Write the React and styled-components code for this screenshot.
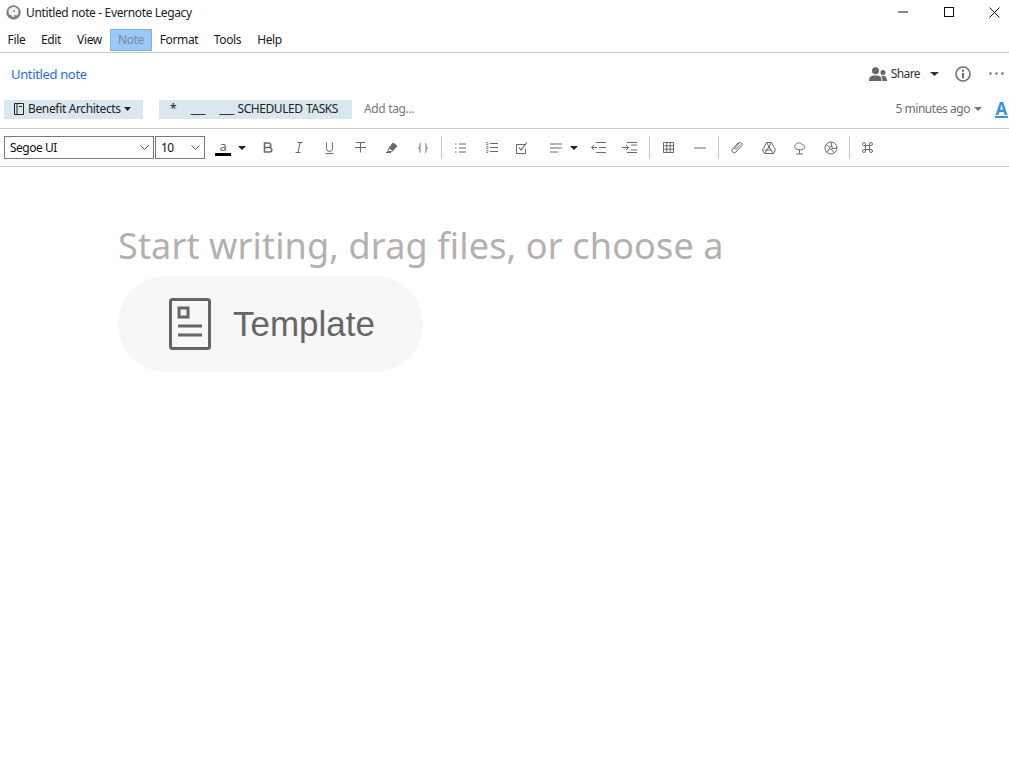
import React from 'react';
import styled, { createGlobalStyle } from 'styled-components';

const GlobalStyle = createGlobalStyle`
  html, body {
    margin: 0;
    padding: 0;
    background: #fff;
    font-family: "Noto Sans", "Open Sans", sans-serif;
  }
`;

const Window = styled.div`
  width: 1009px;
  height: 759px;
  overflow: hidden;
  display: flex;
  flex-direction: column;
  background: #fff;
  color: #1a1a1a;
  font-size: 12px;
  letter-spacing: -0.35px;
`;

const TitleBar = styled.div`
  height: 24px;
  display: flex;
  align-items: center;
  padding-left: 6px;
  gap: 5px;
`;
const TitleText = styled.span`
  flex: 1;
  color: #222;
`;
const WinButtons = styled.div`
  display: flex;
  margin-right: -8px;
`;
const WinButton = styled.button`
  width: 45.5px;
  height: 24px;
  border: 0;
  padding: 0;
  background: none;
  display: flex;
  align-items: center;
  justify-content: center;
`;

const MenuBar = styled.div`
  height: 29px;
  box-sizing: border-box;
  display: flex;
  align-items: flex-start;
  padding-top: 5px;
  border-bottom: 1px solid #c9c9c9;
`;
const MenuItem = styled.div`
  height: 22px;
  box-sizing: border-box;
  display: flex;
  align-items: center;
  justify-content: center;
  padding-bottom: 2px;
  width: ${(p) => p.$w}px;
  border: 1px solid ${(p) => (p.$active ? '#7eb4ea' : 'transparent')};
  background: ${(p) => (p.$active ? '#99c9f7' : 'transparent')};
  color: ${(p) => (p.$active ? '#7d8a99' : '#1a1a1a')};
`;

const NoteHeader = styled.div`
  height: 44px;
  box-sizing: border-box;
  display: flex;
  align-items: center;
  padding: 0 5px 3px 11px;
`;
const NoteTitle = styled.div`
  flex: 1;
  font-size: 13px;
  color: #1f6fd6;
`;
const ShareButton = styled.div`
  display: flex;
  align-items: center;
  color: #333;
`;
const ShareLabel = styled.span`
  margin: 0 10px 0 4px;
  letter-spacing: -0.6px;
`;
const HeaderIcon = styled.div`
  display: flex;
  align-items: center;
  margin-left: ${(p) => p.$ml}px;
`;

const TagRow = styled.div`
  height: 19px;
  margin-top: 3px;
  padding: 0 1px 9px 4px;
  display: flex;
  align-items: center;
  border-bottom: 1px solid #c9c9c9;
`;
const Chip = styled.div`
  height: 19px;
  box-sizing: border-box;
  display: flex;
  align-items: center;
  background: #d9e7ef;
  color: #222;
  white-space: pre;
  padding-bottom: 2px;
  width: ${(p) => p.$w}px;
  margin-right: ${(p) => p.$mr}px;
  padding-left: ${(p) => p.$pl}px;
  word-spacing: ${(p) => p.$ws || 0}px;
  letter-spacing: ${(p) => p.$ls || -0.35}px;
`;
const ChipIcon = styled.svg`
  margin-right: 4px;
`;
const AddTag = styled.div`
  flex: 1;
  color: #777;
  padding-bottom: 2px;
`;
const TimeAgo = styled.div`
  display: flex;
  align-items: center;
  color: #6e6e6e;
  gap: 4px;
  letter-spacing: -0.45px;
  padding-bottom: 2px;
`;
const FontSizeA = styled.div`
  width: 13px;
  margin-left: 13px;
  font-size: 17px;
  font-weight: 700;
  color: #3a94dc;
  letter-spacing: 0;
  line-height: 16px;
  text-align: center;
  border-bottom: 2px solid #3a94dc;
  height: 15px;
`;

const Toolbar = styled.div`
  height: 37px;
  display: flex;
  align-items: center;
  padding-left: 4px;
  border-bottom: 1px solid #c9c9c9;
`;
const Select = styled.div`
  height: 23px;
  box-sizing: border-box;
  width: ${(p) => p.$w}px;
  margin-right: ${(p) => p.$mr}px;
  border: 1px solid #7a7a7a;
  display: flex;
  align-items: center;
  justify-content: space-between;
  padding: 0 4px 0 5px;
  color: #111;
  letter-spacing: -0.5px;
`;
const ToolButton = styled.div`
  width: ${(p) => p.$w || 31}px;
  margin-left: ${(p) => p.$ml || 0}px;
  height: 24px;
  display: flex;
  align-items: center;
  justify-content: center;
  flex-shrink: 0;
`;
const ColorButton = styled(ToolButton)`
  flex-direction: column;
  color: #666;
  font-size: 13px;
  line-height: 14px;
`;
const Separator = styled.div`
  width: 1px;
  height: 23px;
  margin: 0 3px 0 ${(p) => p.$ml || 3}px;
  background: #bccddd;
`;

const Editor = styled.div`
  flex: 1;
  padding: 51px 0 0 118px;
`;
const Placeholder = styled.div`
  font-size: 36px;
  line-height: 56px;
  letter-spacing: 0.15px;
  color: #b3b0ae;
`;
const TemplateButton = styled.div`
  width: 305px;
  height: 96px;
  margin-top: 2px;
  border-radius: 48px;
  background: #f7f7f7;
  display: flex;
  align-items: center;
  padding-left: 51px;
  box-sizing: border-box;
  gap: 22px;
  font-family: "Liberation Sans", Arial, sans-serif;
  font-size: 35px;
  letter-spacing: 0;
  color: #666;
`;

const Ico = ({ children, w = 14, h = 14 }) => (
  <svg width={w} height={h} viewBox={`0 0 ${w} ${h}`} fill="none" stroke="#6a6a6a" strokeWidth="1">
    {children}
  </svg>
);

const Caret = ({ color = '#222', w = 8 }) => (
  <svg width={w} height="4" viewBox="0 0 8 4" preserveAspectRatio="none">
    <path d="M0 0h8L4 4z" fill={color} />
  </svg>
);

const Chevron = () => (
  <svg width="9" height="5" viewBox="0 0 9 5" fill="none" stroke="#555">
    <path d="M.5.5l4 4 4-4" />
  </svg>
);

const MENU = [
  ['File', 33],
  ['Edit', 36],
  ['View', 41],
  ['Note', 42, true],
  ['Format', 54],
  ['Tools', 43],
  ['Help', 41],
];

export default function App() {
  return (
    <Window>
      <GlobalStyle />
      <TitleBar>
        <svg width="15" height="15" viewBox="0 0 15 15">
          <circle cx="7.5" cy="7.5" r="7.2" fill="#808080" />
          <path d="M2.500 6.500C2.500 3.500 5 2 7.500 2c3.500 0 5 2.500 5 5 0 2.500-1.500 3.500-2.500 3.500l-1-1-1.500 3L5 10 3 9.500z" fill="#f2f2f2" />
          <circle cx="8" cy="6" r="1" fill="#808080" />
        </svg>
        <TitleText>Untitled note - Evernote Legacy</TitleText>
        <WinButtons>
          <WinButton>
            <svg width="10" height="2" viewBox="0 0 10 2"><path d="M0 1h10" stroke="#111" /></svg>
          </WinButton>
          <WinButton>
            <svg width="10" height="10" viewBox="0 0 10 10"><rect x=".5" y=".5" width="9" height="9" fill="none" stroke="#111" /></svg>
          </WinButton>
          <WinButton>
            <svg width="11" height="11" viewBox="0 0 11 11"><path d="M.5.5l10 10M10.500.5l-10 10" stroke="#111" /></svg>
          </WinButton>
        </WinButtons>
      </TitleBar>

      <MenuBar>
        {MENU.map(([label, w, active]) => (
          <MenuItem key={label} $w={w} $active={active}>{label}</MenuItem>
        ))}
      </MenuBar>

      <NoteHeader>
        <NoteTitle>Untitled note</NoteTitle>
        <ShareButton>
          <svg width="18" height="14" viewBox="0 0 18 14" fill="#666">
            <circle cx="6.500" cy="3.800" r="3.500" />
            <path d="M0 14c0-4 1.500-5.500 6.500-5.500S12.500 10 12.500 14z" />
            <circle cx="14" cy="5.500" r="2.500" />
            <path d="M13.500 14c0-2.500-.5-4-1.500-5 3.500-1 6 .5 6 5z" />
          </svg>
          <ShareLabel>Share</ShareLabel>
          <Caret w={9} color="#333" />
        </ShareButton>
        <HeaderIcon $ml={16}>
          <svg width="16" height="16" viewBox="0 0 16 16">
            <circle cx="8" cy="8" r="7" fill="none" stroke="#707070" strokeWidth="1.600" />
            <path d="M8 3.800v2M8 7v5.200" stroke="#707070" strokeWidth="2" />
          </svg>
        </HeaderIcon>
        <HeaderIcon $ml={18}>
          <svg width="15" height="3" viewBox="0 0 15 3" fill="#777">
            <circle cx="1.500" cy="1.500" r="1.300" />
            <circle cx="7.500" cy="1.500" r="1.300" />
            <circle cx="13.500" cy="1.500" r="1.300" />
          </svg>
        </HeaderIcon>
      </NoteHeader>

      <TagRow>
        <Chip $w={139} $mr={16} $pl={10}>
          <ChipIcon width="10" height="12" viewBox="0 0 10 12" fill="none" stroke="#222">
            <path d="M.5.5h9v11h-9zM3 .5v11M5 3.500h3" />
          </ChipIcon>
          Benefit Architects{' '}
          <Caret w={7} />
        </Chip>
        <Chip $w={193} $mr={12} $pl={11} $ws={0.9} $ls={-0.45}>*    ___    ___ SCHEDULED TASKS</Chip>
        <AddTag>Add tag...</AddTag>
        <TimeAgo>5 minutes ago <Caret color="#777" w={8} /></TimeAgo>
        <FontSizeA>A</FontSizeA>
      </TagRow>

      <Toolbar>
        <Select $w={150} $mr={1}>Segoe UI <Chevron /></Select>
        <Select $w={50} $mr={6}>10 <Chevron /></Select>
        <ColorButton $w={22} $ml={1}>
          <span>a</span>
          <svg width="16" height="3" viewBox="0 0 16 3"><rect width="16" height="3" fill="#000" /></svg>
        </ColorButton>
        <ToolButton $w={15}><Caret w={8} /></ToolButton>

        <ToolButton $ml={3}>
          <Ico w={10} h={11}><path d="M1.500 1h4a2 2 0 010 4.500h-4zM1.500 5.500h5a2.200 2.200 0 010 4.500h-5z" strokeWidth="1.600" /></Ico>
        </ToolButton>
        <ToolButton><Ico w={8} h={11}><path d="M2.500.5h5M.5 10.500h5M5 .5L3 10.500" /></Ico></ToolButton>
        <ToolButton><Ico w={9} h={12}><path d="M1.500 .5v6a3 3 0 006 0v-6M.5 11.500h8" /></Ico></ToolButton>
        <ToolButton><Ico w={11} h={11}><path d="M1 .5h9M5.500 .5v10M0 5.500h11" /></Ico></ToolButton>
        <ToolButton>
          <Ico w={12} h={11}>
            <path d="M3 6l4-5 4 3-4 4.500z" fill="#6a6a6a" />
            <path d="M3 6L1.500 9.500h4L7 8.500M0 10.500h5" />
          </Ico>
        </ToolButton>
        <ToolButton><Ico w={10} h={10}><path d="M3 .5C1.500 .5 2 2 2 4S.5 5 .5 5 2 5 2 6s-.5 3.500 1 3.500M7 .5C8.500 .5 8 2 8 4s1.500 1 1.500 1S8 5 8 6s.5 3.500-1 3.500" /></Ico></ToolButton>
        <Separator />

        <ToolButton><Ico w={11} h={10}><path d="M0 1h1.500M4 1h7M0 5h1.500M4 5h7M0 9h1.500M4 9h7" /></Ico></ToolButton>
        <ToolButton><Ico w={12} h={12}><path d="M0 .5h2v2H0M0 4.500h2v2H0M0 8.500h2v2H0" strokeWidth=".7" /><path d="M4 1.500h8M4 5.500h8M4 9.500h8" /></Ico></ToolButton>
        <ToolButton><Ico w={13} h={12}><path d="M9.500 2.500h-9v9h9v-5" /><path d="M3 5.500l2 2.500 6-7.500" strokeWidth="1.200" /></Ico></ToolButton>
        <ToolButton $w={25} $ml={5}><Ico w={12} h={10}><path d="M0 1h12M0 5h12M0 9h8" /></Ico></ToolButton>
        <ToolButton $w={11}><Caret w={8} /></ToolButton>
        <ToolButton $ml={4}><Ico w={15} h={11}><path d="M5 .5h10M5 10.500h10M8 5.500h7M6 5.500H.5M3 3L.5 5.500 3 8" /></Ico></ToolButton>
        <ToolButton><Ico w={15} h={11}><path d="M5 .5h10M5 10.500h10M9 3h6M9 8h6M0 5.500h6M4 3l2.500 2.500L4 8" /></Ico></ToolButton>
        <Separator $ml={4} />

        <ToolButton><Ico w={11} h={11}><path d="M.5.5h10v10H.5zM3.800.5v10M7.200.5v10M.5 3.800h10M.5 7.200h10" /></Ico></ToolButton>
        <ToolButton><Ico w={12} h={2}><path d="M0 1h12" /></Ico></ToolButton>
        <Separator />

        <ToolButton>
          <Ico w={13} h={13}>
            <path d="M3 8l5-6a2 2 0 013 2.500L5 11a2.300 2.300 0 01-3.500-3l6-6.500" />
            <path d="M4.500 9L9.500 3.500" />
          </Ico>
        </ToolButton>
        <ToolButton><Ico w={14} h={12}><path d="M4.500.5h5l4 7.500-2 3.500h-9L.5 8zM4.500.5L9 8H2.500M9.500.5L5 8M2.500 11.500L5 8M11.500 11.500L9 8" /></Ico></ToolButton>
        <ToolButton><Ico w={13} h={14}><path d="M3 8C.5 6.500 2 2 5.500 2c2-.5 3 .5 3.500 1.500 2.500 0 3.500 3 1.500 4.500-2 1-5 1-7.500 0zM6.500 8.500v4M3 13h7" /></Ico></ToolButton>
        <ToolButton><Ico w={14} h={14}><circle cx="7" cy="7" r="6" /><circle cx="7" cy="7" r="1.500" /><path d="M7 1l1 4.500M13 7L8.500 7.500M10.500 12L7.500 8.500M3 11.500L5.500 7.500M2 3.500L5.500 6" /></Ico></ToolButton>
        <Separator />
        <ToolButton $w={28}><Ico w={11} h={11}><path d="M3.500 3.500h4v4h-4zM3.500 3.500h-1a1.500 1.500 0 111-1.500zM7.500 3.500V2a1.500 1.500 0 111.500 1.500zM3.500 7.500V9A1.500 1.500 0 112 7.500zM7.500 7.500H9A1.500 1.500 0 117.500 9z" /></Ico></ToolButton>
      </Toolbar>

      <Editor>
        <Placeholder>Start writing, drag files, or choose a</Placeholder>
        <TemplateButton>
          <svg width="42" height="52" viewBox="0 0 42 52" fill="none" stroke="#666" strokeWidth="3">
            <rect x="1.500" y="1.500" width="39" height="49" rx="2" />
            <rect x="10" y="10" width="9" height="9" />
            <path d="M9 28h24M9 37h24" />
          </svg>
          Template
        </TemplateButton>
      </Editor>
    </Window>
  );
}
